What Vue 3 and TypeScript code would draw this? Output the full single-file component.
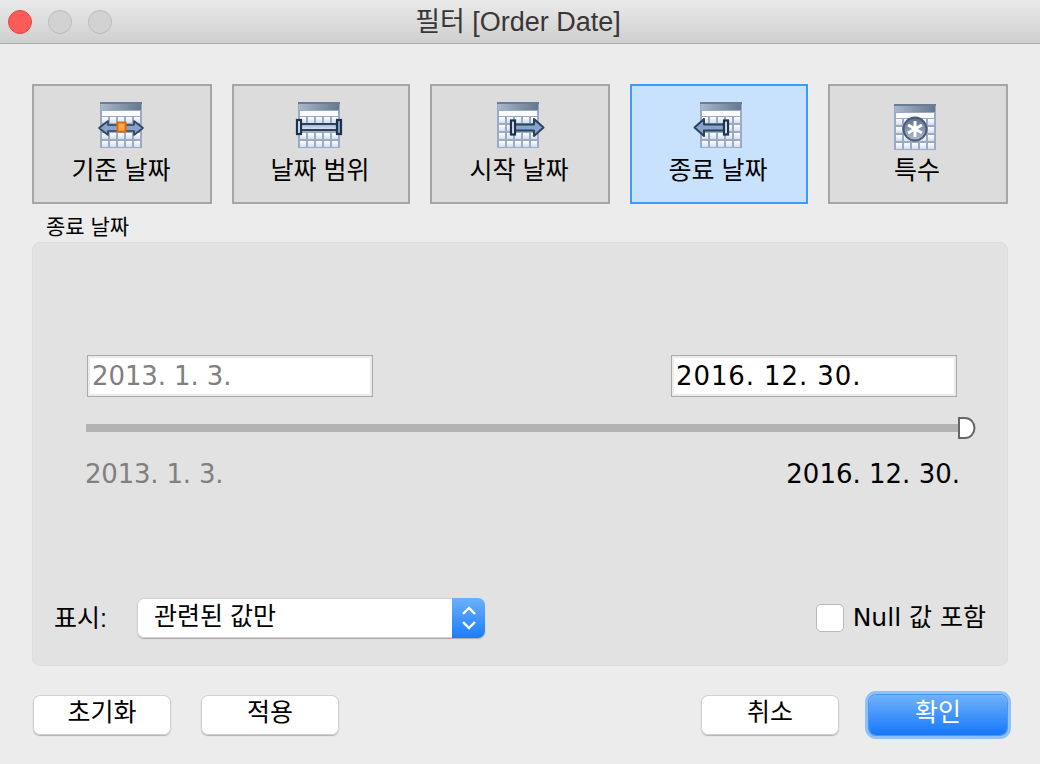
<script setup lang="ts">
type Kind = 'center' | 'range' | 'start' | 'end' | 'special'
interface Tab { kind: Kind; label: string; dx: number; dy: number; active?: boolean; wide: boolean }

const tabs: Tab[] = [
  { kind: 'center', label: '기준 날짜', dx: 3, dy: 2, wide: true },
  { kind: 'range', label: '날짜 범위', dx: 2, dy: 2, wide: false },
  { kind: 'start', label: '시작 날짜', dx: 2, dy: 2, wide: true },
  { kind: 'end', label: '종료 날짜', dx: 6, dy: 2, active: true, wide: false },
  { kind: 'special', label: '특수', dx: 1, dy: 4, wide: true },
]
const cellX = [2, 10, 18, 26, 34]
const cellY = [15, 23, 31, 39]
const rays = [0, 60, 120]
</script>

<template>
  <div class="window">
    <header class="titlebar">
      <div class="lights">
        <span class="light close"></span>
        <span class="light"></span>
        <span class="light"></span>
      </div>
      <h1 class="title">필터 [Order Date]</h1>
    </header>

    <main class="content">
      <div class="tabs">
        <button
          v-for="t in tabs"
          :key="t.kind"
          class="tab"
          :class="{ active: t.active, wide: t.wide }"
          type="button"
        >
          <svg class="tab-icon" width="50" height="50" viewBox="0 0 50 50">
            <defs>
              <linearGradient :id="`hd-${t.kind}`" x1="0" y1="0" x2="1" y2="0">
                <stop offset="0" stop-color="#a9b7ca" />
                <stop offset="1" stop-color="#64788f" />
              </linearGradient>
              <linearGradient :id="`cell-${t.kind}`" x1="0" y1="0" x2="0" y2="1">
                <stop offset="0" stop-color="#ffffff" />
                <stop offset="1" stop-color="#d3def0" />
              </linearGradient>
              <linearGradient :id="`disc-${t.kind}`" x1="0" y1="0" x2="0" y2="1">
                <stop offset="0" stop-color="#5d6e87" />
                <stop offset="1" stop-color="#aebbcf" />
              </linearGradient>
              <linearGradient :id="`bar-${t.kind}`" x1="0" y1="0" x2="0" y2="1">
                <stop offset="0" stop-color="#9db4d2" />
                <stop offset="1" stop-color="#dfe7f3" />
              </linearGradient>
            </defs>
            <g :transform="`translate(${t.dx} ${t.dy})`">
              <rect x="0" y="0" width="42" height="46" fill="#9aaac2" />
              <rect x="0" y="0" width="42" height="2" fill="#6b7d94" />
              <rect x="1" y="2" width="40" height="6" :fill="`url(#hd-${t.kind})`" />
              <rect x="2" y="9" width="38" height="5" fill="#fbfcfe" />
              <g v-for="y in cellY" :key="y">
                <rect
                  v-for="x in cellX"
                  :key="x"
                  :x="x"
                  :y="y"
                  width="6"
                  height="6"
                  :fill="`url(#cell-${t.kind})`"
                />
              </g>

              <g v-if="t.kind === 'center'">
                <path
                  d="M-1 26 8 19V23H34V19L43 26 34 33V29H8V33Z"
                  fill="#83a3cb"
                  stroke="#2f445e"
                  stroke-width="1.6"
                  stroke-linejoin="round"
                />
                <rect x="17.5" y="20.5" width="8" height="9" fill="#fbab45" stroke="#e2690f" stroke-width="2" />
              </g>

              <g v-else-if="t.kind === 'range'">
                <rect x="2" y="22" width="38" height="6" :fill="`url(#bar-${t.kind})`" stroke="#2b425c" stroke-width="2" />
                <rect x="-1" y="18" width="4" height="14" fill="#dfe8f4" stroke="#1c324c" stroke-width="2.2" />
                <rect x="39" y="18" width="4" height="14" fill="#8ca7c9" stroke="#1c324c" stroke-width="2.2" />
              </g>

              <g v-else-if="t.kind === 'start'">
                <path
                  d="M18 22.5H37V17L46.5 25.5 37 34V28.5H18Z"
                  fill="#86a5cc"
                  stroke="#2b425c"
                  stroke-width="2"
                  stroke-linejoin="round"
                />
                <rect x="14" y="18.5" width="4" height="14" fill="#dfe8f4" stroke="#1c324c" stroke-width="2.2" />
              </g>

              <g v-else-if="t.kind === 'end'">
                <path
                  d="M24 22.5H4V17L-5.5 25.5 4 34V28.5H24Z"
                  fill="#86a5cc"
                  stroke="#2b425c"
                  stroke-width="2"
                  stroke-linejoin="round"
                />
                <rect x="24" y="18.5" width="4" height="14" fill="#dfe8f4" stroke="#1c324c" stroke-width="2.2" />
              </g>

              <g v-else>
                <circle cx="21" cy="25" r="11.5" :fill="`url(#disc-${t.kind})`" stroke="#4a5a72" stroke-width="2" />
                <line
                  v-for="r in rays"
                  :key="r"
                  x1="21"
                  y1="17"
                  x2="21"
                  y2="33"
                  stroke="#ffffff"
                  stroke-width="3"
                  :transform="`rotate(${r} 21 25)`"
                />
              </g>
            </g>
          </svg>
          <span class="tab-label">{{ t.label }}</span>
        </button>
      </div>

      <div class="section-label">종료 날짜</div>

      <section class="panel">
        <div class="fields">
          <input class="date-input muted" type="text" value="2013. 1. 3." readonly />
          <input class="date-input" type="text" value="2016. 12. 30." readonly />
        </div>

        <div class="slider">
          <div class="track">
            <svg class="handle" width="18" height="24" viewBox="0 0 18 24">
              <path d="M1 2H7A9.5 10 0 0 1 7 22H1Z" fill="#ffffff" stroke="#666666" stroke-width="2" />
            </svg>
          </div>
        </div>

        <div class="range-labels">
          <span class="range-from">2013. 1. 3.</span>
          <span class="range-to">2016. 12. 30.</span>
        </div>

        <div class="options">
          <label class="show-label">표시:</label>
          <div class="select">
            <span class="select-value">관련된 값만</span>
            <span class="stepper">
              <svg width="20" height="30" viewBox="0 0 20 30">
                <path d="M4 11 10 5 16 11M4 19 10 25 16 19" fill="none" stroke="#ffffff" stroke-width="2.4" />
              </svg>
            </span>
          </div>
          <div class="check">
            <span class="checkbox"></span>
            <span class="check-label">Null 값 포함</span>
          </div>
        </div>
      </section>

      <footer class="footer">
        <button class="btn" type="button">초기화</button>
        <button class="btn" type="button">적용</button>
        <span class="spacer"></span>
        <button class="btn" type="button">취소</button>
        <button class="btn primary" type="button">확인</button>
      </footer>
    </main>
  </div>
</template>

<style scoped>
.window {
  width: 1040px;
  height: 764px;
  overflow: hidden;
  background: #ececec;
  color: #000;
  font-family: "Liberation Sans", "Noto Sans CJK KR", sans-serif;
}
.titlebar {
  position: relative;
  box-sizing: border-box;
  height: 44px;
  display: flex;
  align-items: center;
  justify-content: center;
  background: linear-gradient(#ebeaeb, #d0cfd0);
  border-bottom: 1px solid #ababab;
}
.lights {
  position: absolute;
  left: 8px;
  top: 10px;
  display: flex;
  gap: 16px;
}
.light {
  box-sizing: border-box;
  width: 24px;
  height: 24px;
  border-radius: 50%;
  background: #d2d2d2;
  border: 1px solid #bcbcbc;
}
.light.close {
  background: #fc5b57;
  border-color: #e2463f;
}
.title {
  margin: 0;
  font-size: 27px;
  font-weight: 400;
  color: #3a3636;
  line-height: 44px;
  transform: translateX(-2px);
}
.content {
  padding: 40px 32px 0;
}
.tabs {
  display: flex;
  gap: 20px;
}
.tab {
  box-sizing: border-box;
  width: 178px;
  height: 120px;
  margin: 0;
  padding: 14px 0 0;
  display: flex;
  flex-direction: column;
  align-items: center;
  background: #dcdcdc;
  border: 2px solid #a5a5a5;
  border-radius: 0;
  font: inherit;
  color: #000;
}
.tab.wide {
  width: 180px;
}
.tab.active {
  background: #c8e2fd;
  border-color: #3a9bfc;
}
.tab-icon {
  display: block;
  overflow: visible;
}
.tab-label {
  font-size: 25px;
  font-weight: 400;
  line-height: 34px;
  margin: 3px 2px 0 0;
}
.section-label {
  height: 38px;
  box-sizing: border-box;
  padding: 8px 0 0 14px;
  font-size: 21px;
  line-height: 30px;
}
.panel {
  box-sizing: border-box;
  height: 424px;
  display: flex;
  flex-direction: column;
  background: #e2e2e2;
  border: 1px solid #dcdcdc;
  border-radius: 8px;
}
.fields {
  display: flex;
  justify-content: space-between;
  margin: 112px 50px 0 54px;
}
.date-input {
  box-sizing: border-box;
  width: 286px;
  height: 42px;
  margin: 0;
  padding: 0 0 0 4px;
  background: #fff;
  border: 1px solid #aaaaaa;
  box-shadow: inset 0 0 0 2px #ebebeb;
  border-radius: 0;
  outline: none;
  font-family: "DejaVu Sans", "Noto Sans CJK KR", sans-serif;
  font-size: 26px;
  letter-spacing: 0.9px;
  color: #000;
}
.date-input.muted {
  color: #808080;
  letter-spacing: -0.1px;
}
.slider {
  margin: 27px 47px 0 53px;
}
.track {
  position: relative;
  height: 8px;
  background: #b3b3b3;
}
.handle {
  position: absolute;
  right: -16px;
  top: -8px;
  display: block;
}
.range-labels {
  display: flex;
  justify-content: space-between;
  margin: 26px 47px 0 52px;
  font-family: "DejaVu Sans", "Noto Sans CJK KR", sans-serif;
  font-size: 26px;
  line-height: 32px;
}
.range-from {
  color: #808080;
  letter-spacing: -0.2px;
}
.range-to {
  letter-spacing: 0;
}
.options {
  margin-top: auto;
  padding: 0 21px 27px 21px;
  display: flex;
  align-items: center;
}
.show-label {
  width: 83px;
  font-size: 25px;
  line-height: 40px;
}
.select {
  box-sizing: border-box;
  width: 348px;
  height: 40px;
  display: flex;
  align-items: stretch;
  justify-content: space-between;
  background: #fff;
  border-radius: 7px;
  box-shadow: inset 0 0 0 1px #cfcfcf, 0 1px 1px rgba(0, 0, 0, 0.25);
  overflow: hidden;
}
.select-value {
  padding-left: 17px;
  font-size: 25px;
  line-height: 36px;
}
.stepper {
  width: 33px;
  display: flex;
  align-items: center;
  justify-content: center;
  background: linear-gradient(#6db0fb, #1a7efb);
}
.check {
  margin-left: auto;
  display: flex;
  align-items: center;
  gap: 9px;
}
.checkbox {
  box-sizing: border-box;
  width: 28px;
  height: 28px;
  background: #fff;
  border: 1px solid #b9b9b9;
  border-radius: 5px;
}
.check-label {
  font-family: "DejaVu Sans", "Noto Sans CJK KR", sans-serif;
  font-size: 25px;
  line-height: 30px;
}
.footer {
  display: flex;
  gap: 30px;
  margin: 29px 1px 0;
}
.spacer {
  flex: 1;
  margin-left: -30px;
}
.btn {
  box-sizing: border-box;
  width: 138px;
  height: 40px;
  margin: 0;
  padding: 0 0 6px;
  background: #fff;
  border: none;
  border-radius: 7px;
  box-shadow: inset 0 0 0 1px #d0d0d0, 0 1px 1px rgba(0, 0, 0, 0.25);
  font: inherit;
  font-size: 25px;
  line-height: 34px;
  color: #000;
}
.btn.primary {
  background: linear-gradient(#70b2fa, #1677fb);
  color: #fff;
  box-shadow: 0 0 0 1px #4a94f2, 0 0 0 4px #8fc1f8;
}
</style>
